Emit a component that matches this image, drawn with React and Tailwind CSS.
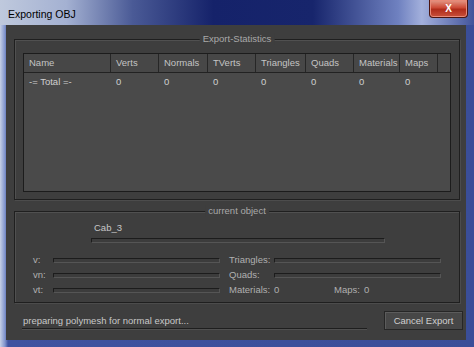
import React from 'react';

const cols = [
  { name: 'Name', w: 'w-[87px]', val: '-= Total =-' },
  { name: 'Verts', w: 'w-[48px]', val: '0' },
  { name: 'Normals', w: 'w-[49px]', val: '0' },
  { name: 'TVerts', w: 'w-[48px]', val: '0' },
  { name: 'Triangles', w: 'w-[50px]', val: '0' },
  { name: 'Quads', w: 'w-[48px]', val: '0' },
  { name: 'Materials', w: 'w-[46px]', val: '0' },
  { name: 'Maps', w: 'w-[38px]', val: '0' },
];

const SunkenBar = ({ className }) => (
  <div
    className={`h-[5px] border-t border-l border-[#1c1c1c] border-b border-r border-b-[#555] border-r-[#555] bg-[#3c3c3c] ${className}`}
  />
);

const GroupBox = ({ label, className, children }) => (
  <div
    className={`relative border border-[#1f1f1f] shadow-[inset_1px_1px_0_#505050,1px_1px_0_#4c4c4c] ${className}`}
  >
    <span className="absolute top-[-7px] left-1/2 -translate-x-1/2 bg-[#3e3e3e] px-[3px] leading-[12px] text-[#a9a9a9]">
      {label}
    </span>
    {children}
  </div>
);

const App = () => {
  return (
    <div
      className="w-[474px] h-[347px] flex flex-col overflow-hidden bg-[linear-gradient(90deg,#c6d0e6_0px,#7f93cc_5px,#3f53a0_8px,#3a4e98_100%)] text-[9.5px]"
      style={{ fontFamily: '"Liberation Sans", Arial, sans-serif' }}
    >
      {/* title bar */}
      <div className="h-[25px] shrink-0 flex items-start justify-between bg-[linear-gradient(90deg,#bfc9dd_0%,#a4b1d2_14%,#4a5a96_28%,#15226a_45%,#17256c_66%,#6f81c0_84%,#a3b0dc_89%,#42549a_100%)]">
        <span className="pl-[8px] pt-[8px] text-[10.5px] leading-[12px] text-black">Exporting OBJ</span>
        <div className="mr-[6px] w-[39px] h-[18px] flex items-center justify-center rounded-b-[4px] border border-t-0 border-[#4a1410] bg-[linear-gradient(180deg,#e49a88_0%,#cc4a36_45%,#b02c1a_55%,#c8503a_100%)] shadow-[inset_0_0_0_1px_#e88a78]">
          <span className="text-white font-bold text-[10px] leading-none">X</span>
        </div>
      </div>

      {/* client area */}
      <div className="ml-[6px] mr-[8px] mb-[7px] flex-1 flex flex-col bg-[#3e3e3e] text-[#c4c4c4]">
        <GroupBox label="Export-Statistics" className="mt-[14px] ml-[8px] w-[446px] h-[161px]">
          <div className="mt-[13px] ml-[8px] w-[428px] h-[139px] border border-[#1c1c1c] bg-[#4a4a4a] flex flex-col">
            <div className="h-[19px] flex border-b border-[#222] bg-[#474747]">
              {cols.map((c) => (
                <div
                  key={c.name}
                  className={`${c.w} shrink-0 border-r border-[#262626] pl-[5px] flex items-center leading-[12px]`}
                >
                  {c.name}
                </div>
              ))}
              <div className="flex-1" />
            </div>
            <div className="h-[17px] flex">
              {cols.map((c) => (
                <div key={c.name} className={`${c.w} shrink-0 pl-[5px] flex items-center leading-[12px] text-[#d0d0d0]`}>
                  {c.val}
                </div>
              ))}
            </div>
          </div>
        </GroupBox>

        <GroupBox label="current object" className="mt-[11px] ml-[8px] w-[446px] h-[92px]">
          <div className="pt-[10px] pl-[79px] leading-[12px] text-[#c8c8c8]">Cab_3</div>
          <SunkenBar className="mt-[4px] ml-[76px] w-[294px]" />
          <div className="mt-[10px] flex flex-col text-[#b0b0b0]">
            <div className="h-[15px] flex items-center">
              <span className="w-[38px] pl-[18px] shrink-0">v:</span>
              <SunkenBar className="w-[167px]" />
              <span className="ml-[9px] w-[45px] shrink-0">Triangles:</span>
              <SunkenBar className="w-[167px]" />
            </div>
            <div className="h-[15px] flex items-center">
              <span className="w-[38px] pl-[18px] shrink-0">vn:</span>
              <SunkenBar className="w-[167px]" />
              <span className="ml-[9px] w-[45px] shrink-0">Quads:</span>
              <SunkenBar className="w-[167px]" />
            </div>
            <div className="h-[15px] flex items-center">
              <span className="w-[38px] pl-[18px] shrink-0">vt:</span>
              <SunkenBar className="w-[167px]" />
              <span className="ml-[9px] w-[45px] shrink-0">Materials:</span>
              <span className="w-[60px] shrink-0">0</span>
              <span className="w-[30px] shrink-0">Maps:</span>
              <span>0</span>
            </div>
          </div>
        </GroupBox>

        <div className="mt-[8px] flex items-start">
          <div className="ml-[16px] w-[345px] pt-[4px] flex flex-col">
            <span className="pl-[1px] leading-[12px] text-[#c8c8c8]">preparing polymesh for normal export...</span>
            <div className="mt-[1px] h-[2px] border-t border-[#1e1e1e] border-b border-b-[#505050]" />
          </div>
          <button className="ml-[17px] w-[79px] h-[19px] border border-[#262626] bg-[#474747] shadow-[inset_1px_1px_0_#5c5c5c] text-[#d0d0d0] leading-[12px]">
            Cancel Export
          </button>
        </div>
      </div>
    </div>
  );
};

export default App;
